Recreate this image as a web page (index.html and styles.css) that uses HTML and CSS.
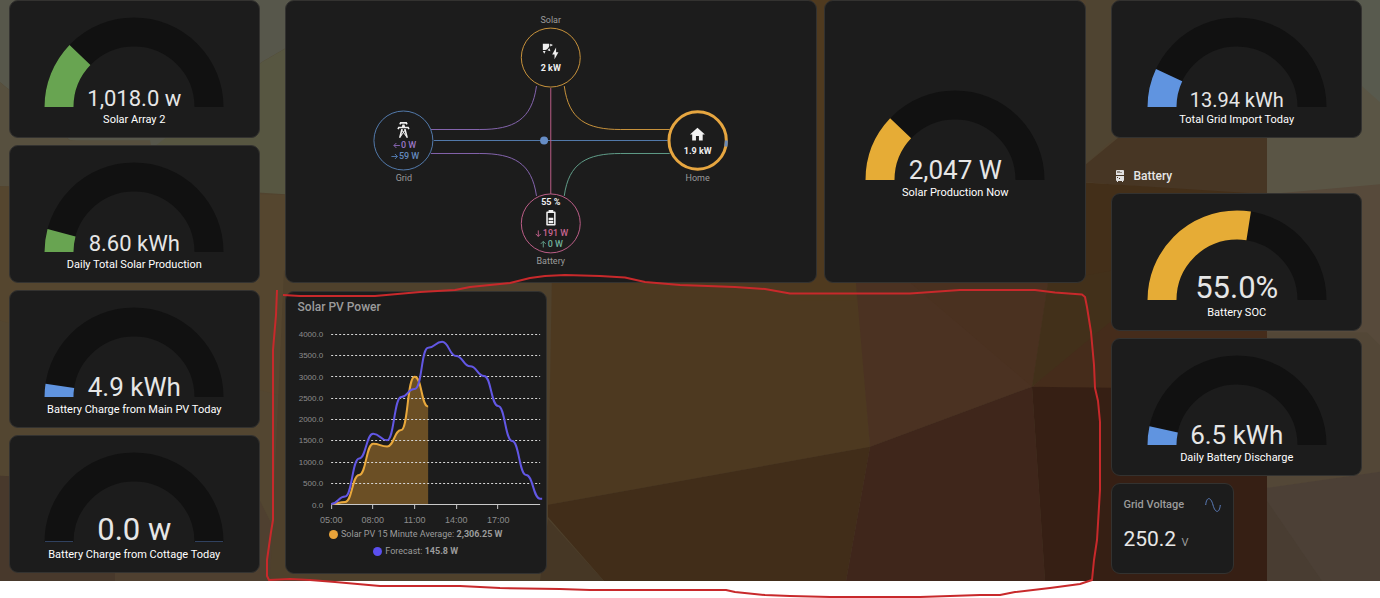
FILE: index.html
```html
<!DOCTYPE html>
<html lang="en">
<head>
<meta charset="utf-8">
<title>Energy dashboard</title>
<link rel="stylesheet" href="styles.css">
</head>
<body>
<div class="page">
<main class="dashboard">
  <svg class="backdrop" viewBox="0 0 1380 580" preserveAspectRatio="none" aria-hidden="true">
    <rect width="1380" height="580" fill="#51432f"/>
    <polygon points="0,0 300,0 300,40 262,62 160,150 70,140 0,82" fill="#57574b"/>
    <polygon points="0,82 70,140 150,140 160,190 0,186" fill="#57503f"/>
    <polygon points="150,150 262,62 300,40 300,195 150,185" fill="#575641"/>
    <polygon points="0,186 300,195 300,460 0,320" fill="#55462f"/>
    <polygon points="0,320 300,400 300,580 0,475" fill="#534631"/>
    <polygon points="0,475 120,480 115,580 0,580" fill="#48392c"/>
    <polygon points="115,440 260,500 300,580 115,580" fill="#4f4030"/>
    <polygon points="284,270 560,270 552,503 552,520 604,580 270,580" fill="#4f412c"/>
    <polygon points="552,270 856,270 870,446 548,504" fill="#4d3920"/>
    <polygon points="800,0 856,0 856,300 800,300" fill="#4f3a1f"/>
    <polygon points="548,504 870,446 846,580 604,580 548,516" fill="#412d19"/>
    <polygon points="548,518 604,580 540,580" fill="#463725"/>
    <polygon points="856,282 1048,282 1032,386 870,446" fill="#4b3222"/>
    <polygon points="910,282 1048,282 1032,386" fill="#4a3120"/>
    <polygon points="870,446 1032,386 1045,580 846,580" fill="#3f261b"/>
    <polygon points="1086,0 1268,0 1268,110 1112,140 1086,164" fill="#4f4431"/>
    <polygon points="1086,164 1120,136 1268,136 1268,196 1086,182" fill="#473624"/>
    <polygon points="1080,182 1268,194 1268,325 1112,325 1080,350" fill="#432f19"/>
    <polygon points="1048,282 1112,270 1112,325 1032,386" fill="#42301a"/>
    <polygon points="1112,320 1268,330 1268,392 1032,386" fill="#452c1b"/>
    <polygon points="1032,386 1268,389 1268,580 1045,580" fill="#361f14"/>
    <rect x="1267" width="113" height="580" fill="#574a3b"/>
    <polygon points="1267,0 1380,0 1380,184 1267,194" fill="#5a5545"/>
    <polygon points="1340,0 1380,0 1380,102 1362,86 1340,84" fill="#585a4e"/>
    <polygon points="1267,332 1367,332 1380,345 1380,471 1267,487" fill="#534737"/>
    <polygon points="1267,487 1380,471 1380,580 1267,580" fill="#4c4036"/>
    <polygon points="1267,500 1322,580 1267,580" fill="#493d32"/>
  </svg>

  <section class="column">
    <article class="card gauge-card">
      <div class="gauge">
        <svg class="dial" viewBox="0 0 180 90" aria-hidden="true"><path class="track" d="M15 90a75 75 0 0 1 150 0"/><path class="level green" pathLength="100" stroke-dasharray="24.4 200" d="M15 90a75 75 0 0 1 150 0"/></svg>
        <p class="value size-m">1,018.0 w</p>
      </div>
      <h2 class="name">Solar Array 2</h2>
    </article>
    <article class="card gauge-card">
      <div class="gauge">
        <svg class="dial" viewBox="0 0 180 90" aria-hidden="true"><path class="track" d="M15 90a75 75 0 0 1 150 0"/><path class="level green" pathLength="100" stroke-dasharray="8.3 200" d="M15 90a75 75 0 0 1 150 0"/></svg>
        <p class="value size-m">8.60 kWh</p>
      </div>
      <h2 class="name">Daily Total Solar Production</h2>
    </article>
    <article class="card gauge-card">
      <div class="gauge">
        <svg class="dial" viewBox="0 0 180 90" aria-hidden="true"><path class="track" d="M15 90a75 75 0 0 1 150 0"/><path class="level blue" pathLength="100" stroke-dasharray="4.8 200" d="M15 90a75 75 0 0 1 150 0"/></svg>
        <p class="value size-l">4.9 kWh</p>
      </div>
      <h2 class="name">Battery Charge from Main PV Today</h2>
    </article>
    <article class="card gauge-card">
      <div class="gauge">
        <svg class="dial" viewBox="0 0 180 90" aria-hidden="true"><path class="track" d="M15 90a75 75 0 0 1 150 0"/><path class="zero" d="M1 89.5h28M151 89.5h28"/></svg>
        <p class="value size-xl">0.0 w</p>
      </div>
      <h2 class="name">Battery Charge from Cottage Today</h2>
    </article>
  </section>

  <section class="center">
    <article class="card flow-card">
      <svg class="flow" viewBox="286 1 531 280" role="img" aria-label="Power flow">
        <g class="lines">
          <path class="purple" d="M431 129.500H480C514 129.500 532 120 536.700 86"/>
          <path class="purple" d="M431 153.500H480C514 153.500 532 163 536.700 196"/>
          <path class="amber" d="M670 129.500H621C587 129.500 569 120 564.500 86"/>
          <path class="teal" d="M670 153.500H621C587 153.500 569 163 564.500 196"/>
          <path class="steel" d="M434 140.500H668"/>
          <path class="pink" d="M551 88V194"/>
          <circle class="amber" cx="551" cy="57.500" r="29.500"/>
          <circle class="steel" cx="403.500" cy="140.500" r="29.500"/>
          <circle class="pink" cx="551" cy="223.500" r="29.500"/>
        </g>
        <circle class="dot" cx="544.300" cy="140.500" r="4"/>
        <circle class="home-ring" cx="698" cy="140.500" r="28.700"/>
        <path class="home-share" d="M726.700 140.500a28.700 28.700 0 0 1-.5 6"/>
        <g class="icons">
          <path transform="translate(541.500 42) scale(.78)" d="M11.450 2V5.550L15 3.770L11.450 2M10.450 8L8 10.460L11.750 11.710L10.450 8M2 11.450L3.770 15L5.550 11.450H2M10 2H2V10C2.570 10.170 3.170 10.250 3.770 10.250C7.350 10.260 10.260 7.350 10.270 3.750C10.260 3.160 10.170 2.570 10 2M17 22V16H14L19 7V13H22L17 22Z"/>
          <path transform="translate(394.200 120.500) scale(.78)" d="M8.280 5.450L6.500 4.550L7.760 2H16.230L17.500 4.550L15.720 5.440L15 4H9L8.280 5.450M18.620 8H14.090L13.300 5H10.700L9.910 8H5.380L4.100 10.550L5.890 11.440L6.620 10H17.380L18.100 11.450L19.890 10.560L18.620 8M17.770 22H15.700L15.460 21.100L12 15.900L8.530 21.100L8.300 22H6.230L9.120 11H11.190L10.830 12.350L12 14.100L13.160 12.350L12.810 11H14.880L17.770 22M11.400 15L10.500 13.650L9.320 18.130L11.400 15M14.680 18.120L13.500 13.640L12.600 15L14.680 18.120Z"/>
          <path transform="translate(688.800 125.500) scale(.75)" d="M10 20V14H14V20H19V12H22L12 3L2 12H5V20H10Z"/>
          <path transform="translate(541.800 208.500) scale(.78)" d="M16 20H8V6H16M16.670 4H15V2H9V4H7.330C6.600 4 6 4.600 6 5.330V20.670C6 21.400 6.600 22 7.330 22H16.670C17.410 22 18 21.410 18 20.670V5.330C18 4.600 17.400 4 16.670 4M15 16H9V19H15V16M15 12H9V15H15V12"/>
        </g>
        <g class="arrows">
          <path class="purple" d="M400 145.500h-6M396.500 143l-2.500 2.500 2.500 2.500"/>
          <path class="steel" d="M391.500 156.500h6M395 154l2.500 2.500-2.500 2.500"/>
          <path class="pink" d="M538.500 230.500v6M536 234l2.500 2.500 2.500-2.500"/>
          <path class="teal" d="M543.500 247.500v-6M541 244l2.500-2.500 2.500 2.500"/>
        </g>
        <g class="node-label">
          <text x="551" y="23">Solar</text>
          <text x="404" y="181">Grid</text>
          <text x="698" y="181">Home</text>
          <text x="551" y="264">Battery</text>
        </g>
        <g class="node-total">
          <text x="551" y="71">2 kW</text>
          <text x="698" y="154">1.9 kW</text>
          <text x="551" y="205">55 %</text>
        </g>
        <g class="node-value">
          <text class="purple" x="401" y="148">0 W</text>
          <text class="steel" x="399" y="159">59 W</text>
          <text class="pink" x="543" y="236">191 W</text>
          <text class="teal" x="548" y="247">0 W</text>
        </g>
      </svg>
    </article>

    <article class="card gauge-card">
      <div class="gauge">
        <svg class="dial" viewBox="0 0 180 90" aria-hidden="true"><path class="track" d="M15 90a75 75 0 0 1 150 0"/><path class="level yellow" pathLength="100" stroke-dasharray="24.2 200" d="M15 90a75 75 0 0 1 150 0"/></svg>
        <p class="value size-l">2,047 W</p>
      </div>
      <h2 class="name">Solar Production Now</h2>
    </article>

    <div class="lower">
      <article class="card chart-card">
        <h2 class="title">Solar PV Power</h2>
        <svg class="chart" viewBox="286 318 260 208" role="img" aria-label="Solar PV power and forecast by hour">
          <path class="area" d="M331 504C338 504 338 502 345 502S352 475 359 475S366 443.700 373 443.700S380 446.500 387 446.500S394 430 401 430S407 376.700 414.500 376.700S421 406.500 428 406.500V504.500H331Z"/>
          <path class="gridlines" d="M331 334.500H540M331 355.500H540M331 376.500H540M331 398.500H540M331 419.500H540M331 440.500H540M331 462.500H540M331 483.500H540"/>
          <path class="axis" d="M331 504.500H540M331.500 504v5M372.500 504v5M414.500 504v5M456.500 504v5M497.500 504v5"/>
          <path class="series average" d="M331 504C338 504 338 502 345 502S352 475 359 475S366 443.700 373 443.700S380 446.500 387 446.500S394 430 401 430S407 376.700 414.500 376.700S421 406.500 428 406.500"/>
          <path class="series forecast" d="M331 504C338 504 338 496.500 345 496.500S352 458.500 359 458.500S366 433.700 373 433.700S380 440.300 387 440.300S394 397 401 397S407 389 414.500 389S421 347.700 428 347.700S435 341.700 442 341.700S449 356 456 356S463 366.300 470 366.300S477 376 484 376S491 406 498 406S505 441 512 441S519 475 526 475S533 498.700 540 498.700H542"/>
          <g class="y-labels">
            <text x="323" y="337">4000.0</text><text x="323" y="358">3500.0</text><text x="323" y="380">3000.0</text><text x="323" y="401">2500.0</text><text x="323" y="422">2000.0</text><text x="323" y="443">1500.0</text><text x="323" y="465">1000.0</text><text x="323" y="486">500.0</text><text x="323" y="508">0.0</text>
          </g>
          <g class="x-labels">
            <text x="331" y="523">05:00</text><text x="372.500" y="523">08:00</text><text x="414.500" y="523">11:00</text><text x="456" y="523">14:00</text><text x="498" y="523">17:00</text>
          </g>
        </svg>
        <ul class="legend">
          <li><span class="swatch average-swatch"></span>Solar PV 15 Minute Average: <b>2,306.25 W</b></li>
          <li><span class="swatch forecast-swatch"></span>Forecast: <b>145.8 W</b></li>
        </ul>
      </article>
    </div>
  </section>

  <section class="column">
    <article class="card gauge-card">
      <div class="gauge">
        <svg class="dial" viewBox="0 0 180 90" aria-hidden="true"><path class="track" d="M15 90a75 75 0 0 1 150 0"/><path class="level blue" pathLength="100" stroke-dasharray="14 200" d="M15 90a75 75 0 0 1 150 0"/></svg>
        <p class="value size-s">13.94 kWh</p>
      </div>
      <h2 class="name">Total Grid Import Today</h2>
    </article>
    <h2 class="heading">
      <svg class="heading-icon" viewBox="0 0 12 12" aria-hidden="true"><path d="M3 0h6a1 1 0 0 1 1 1v4H2V1a1 1 0 0 1 1-1zM2 6h8v4a1 1 0 0 1-1 1v1H8v-1H4v1H3v-1a1 1 0 0 1-1-1z" fill="#e1e1e1"/><path d="M3 2h3M3 7.500h1M5 8.500h1M7 2v1" stroke="#473624"/></svg>
      Battery
    </h2>
    <article class="card gauge-card">
      <div class="gauge">
        <svg class="dial" viewBox="0 0 180 90" aria-hidden="true"><path class="track" d="M15 90a75 75 0 0 1 150 0"/><path class="level yellow" pathLength="100" stroke-dasharray="55 200" d="M15 90a75 75 0 0 1 150 0"/></svg>
        <p class="value size-xl">55.0%</p>
      </div>
      <h2 class="name">Battery SOC</h2>
    </article>
    <article class="card gauge-card">
      <div class="gauge">
        <svg class="dial" viewBox="0 0 180 90" aria-hidden="true"><path class="track" d="M15 90a75 75 0 0 1 150 0"/><path class="level blue" pathLength="100" stroke-dasharray="6.7 200" d="M15 90a75 75 0 0 1 150 0"/></svg>
        <p class="value size-l">6.5 kWh</p>
      </div>
      <h2 class="name">Daily Battery Discharge</h2>
    </article>
    <article class="card stat-card">
      <header class="stat-head">
        <h2 class="stat-title">Grid Voltage</h2>
        <svg class="wave" viewBox="0 0 16 16" aria-hidden="true"><path d="M.7 8C1.500 -.5 5.800 -.5 8 8S14.500 16.500 15.300 8"/></svg>
      </header>
      <p class="stat-value">250.2 <span class="unit">V</span></p>
    </article>
  </section>
</main>

<svg class="markup" viewBox="0 0 1380 598" preserveAspectRatio="none" aria-hidden="true">
  <path d="M283 295L300 296L375 296L420 292L455 290L470 287L510 283L530 278L545 276L565 275L600 276L625 277.500L645 282L680 285L735 287L765 289L790 293.500L910 293.500L960 290L1035 290L1055 292.500L1082 294.500L1085 297L1087 307L1091 332L1094 365L1095 388L1098 401L1100 422L1100 490L1097 540L1094 560L1092 580L1080 584L1050 588L1015 592L1000 595L980 595L920 597L830 597L790 596L765 595L735 592L726 590L590 590L560 589L500 588L460 586L380 586L335 582L310 580L290 579L269 580L267 576L267 560L271 532L273 520L273 350L276 315L277 290"/>
</svg>
</div>
</body>
</html>
```
FILE: styles.css
```css
* { box-sizing: border-box; }
body { margin: 0; background: #fff; font-family: Roboto, "Liberation Sans", sans-serif; color: #e6e6e6; }
h2, p, ul { margin: 0; padding: 0; }
.page { position: relative; min-height: 100vh; }

.dashboard {
  position: relative;
  display: grid;
  grid-template-columns: 5fr 16fr 5fr;
  gap: 25px;
  padding: 0 18px 7px 9px;
}
.backdrop { position: absolute; inset: 0; width: 100%; height: 100%; }
.column { position: relative; display: flex; flex-direction: column; gap: 7px; }
.center {
  position: relative;
  display: grid;
  grid-template-columns: 67fr 33fr;
  grid-template-rows: 1fr 1fr;
  gap: 8px 7px;
}
.lower { grid-column: 1 / -1; display: grid; grid-template-columns: 33fr 67fr; gap: 7px; }

.card { background: #1c1c1c; border: 1px solid #333230; border-radius: 9px; min-width: 0; }

.gauge-card { display: flex; flex-direction: column; align-items: center; justify-content: center; padding: 16px 8px 9px; }
.gauge { display: grid; justify-items: center; }
.gauge > * { grid-area: 1 / 1; }
.dial { display: block; width: 180px; height: 90px; fill: none; }
.track { stroke: #111; stroke-width: 29; }
.level { stroke-width: 29; }
.green { stroke: #68a451; }
.blue { stroke: #6094e0; }
.yellow { stroke: #e6ac36; }
.zero { stroke: #30415f; }
.value { align-self: end; margin-bottom: -3px; line-height: 1; white-space: nowrap; }
.size-s { font-size: 20px; }
.size-m { font-size: 22px; }
.size-l { font-size: 26px; }
.size-xl { font-size: 31px; }
.name { margin-top: 5px; font-size: 11px; font-weight: 400; line-height: 16px; text-align: center; color: #fff; }

.flow { display: block; width: 100%; height: 280px; }
.lines { fill: none; stroke-width: 1; }
.lines .purple, .arrows .purple { stroke: #8463ad; }
.lines .amber { stroke: #c7923b; }
.lines .teal, .arrows .teal { stroke: #5f9c88; }
.lines .steel, .arrows .steel { stroke: #5279ab; }
.lines .pink, .arrows .pink { stroke: #bb5d87; }
.arrows { fill: none; }
.dot { fill: #668dc6; }
.home-ring { fill: none; stroke: #e6a640; stroke-width: 3; }
.home-share { fill: none; stroke: #6c8cb8; stroke-width: 3; }
.icons { fill: #f0f0f0; }
.flow text { font-size: 9px; }
.node-label { fill: #9b9b9b; text-anchor: middle; }
.node-total { fill: #efefef; font-weight: 700; text-anchor: middle; }
.node-value { font-weight: 500; }
.node-value .purple { fill: #9a76c4; }
.node-value .steel { fill: #6489bd; }
.node-value .pink { fill: #c76590; }
.node-value .teal { fill: #70b19b; }

.chart-card { display: flex; flex-direction: column; padding-bottom: 11px; }
.title { padding: 7px 12px 0; font-size: 12px; font-weight: 500; line-height: 16px; color: #9b9b9b; }
.chart { display: block; width: 100%; height: 208px; margin-top: 3px; }
.area { fill: #6b4f25; }
.gridlines { fill: none; stroke: #d8d8d8; stroke-dasharray: 2 2; }
.axis { fill: none; stroke: #c9c9c9; }
.series { fill: none; stroke-width: 2; }
.average { stroke: #e8a83c; }
.forecast { stroke: #6257e4; }
.chart text { fill: #8c8c8c; font-family: "Liberation Sans", Arial, sans-serif; }
.y-labels { font-size: 8px; text-anchor: end; }
.x-labels { font-size: 9px; text-anchor: middle; }
.legend { list-style: none; font-size: 9px; line-height: 17px; color: #9b9b9b; text-align: center; }
.swatch { display: inline-block; width: 9px; height: 9px; margin-right: 3px; border-radius: 50%; vertical-align: middle; }
.average-swatch { background: #e8a33a; }
.forecast-swatch { background: #5b4fee; }

.heading { display: flex; align-items: center; gap: 7px; height: 41px; padding: 20px 3px 0; font-size: 12px; font-weight: 500; }
.heading-icon { width: 12px; height: 12px; }
.stat-card { width: 49%; flex: 1; padding: 12px 12px 16px 11px; }
.stat-head { display: flex; align-items: center; justify-content: space-between; line-height: 18px; }
.stat-title { font-size: 11px; font-weight: 500; color: #9b9b9b; white-space: nowrap; }
.wave { width: 16px; height: 16px; fill: none; stroke: #5d7fbe; stroke-width: 1; }
.stat-value { margin-top: 11px; font-size: 21px; line-height: 28px; white-space: nowrap; }
.unit { font-size: 11px; color: #9b9b9b; }

.markup { position: absolute; top: 0; left: 0; width: 100%; height: 598px; pointer-events: none; fill: none; stroke: #c8292b; stroke-width: 2; stroke-linejoin: round; }
```
